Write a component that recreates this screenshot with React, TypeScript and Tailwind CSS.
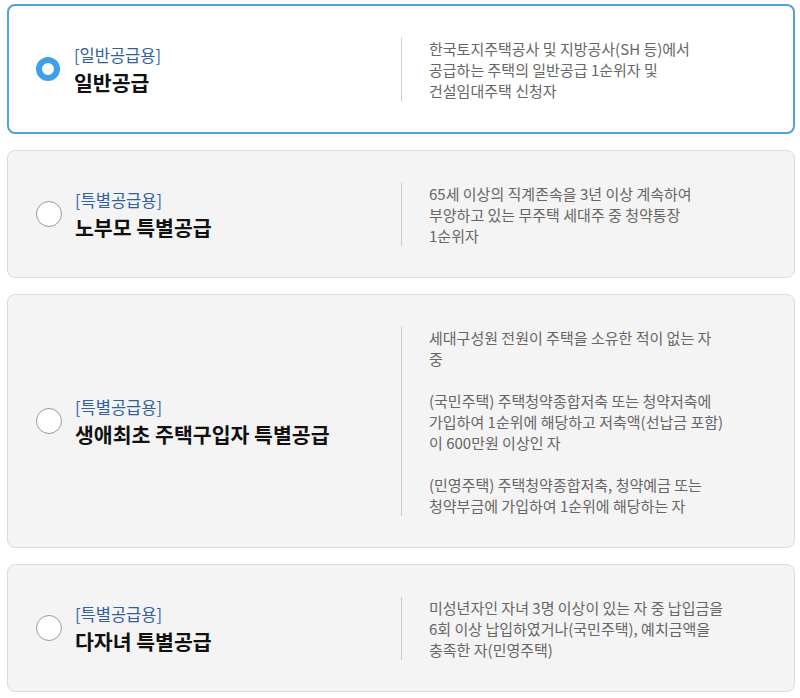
import { useState } from 'react';

type Option = {
  id: string;
  tag: string;
  title: string;
  desc: string[][];
};

const OPTIONS: Option[] = [
  {
    id: 'general',
    tag: '[일반공급용]',
    title: '일반공급',
    desc: [['한국토지주택공사 및 지방공사(SH 등)에서', '공급하는 주택의 일반공급 1순위자 및', '건설임대주택 신청자']],
  },
  {
    id: 'parents',
    tag: '[특별공급용]',
    title: '노부모 특별공급',
    desc: [['65세 이상의 직계존속을 3년 이상 계속하여', '부양하고 있는 무주택 세대주 중 청약통장', '1순위자']],
  },
  {
    id: 'first',
    tag: '[특별공급용]',
    title: '생애최초 주택구입자 특별공급',
    desc: [
      ['세대구성원 전원이 주택을 소유한 적이 없는 자', '중'],
      ['(국민주택) 주택청약종합저축 또는 청약저축에', '가입하여 1순위에 해당하고 저축액(선납금 포함)', '이 600만원 이상인 자'],
      ['(민영주택) 주택청약종합저축, 청약예금 또는', '청약부금에 가입하여 1순위에 해당하는 자'],
    ],
  },
  {
    id: 'multi',
    tag: '[특별공급용]',
    title: '다자녀 특별공급',
    desc: [['미성년자인 자녀 3명 이상이 있는 자 중 납입금을', '6회 이상 납입하였거나(국민주택), 예치금액을', '충족한 자(민영주택)']],
  },
];

export default function App() {
  const [selected, setSelected] = useState('general');

  return (
    <div
      className="w-[800px] min-h-[698px] bg-white pt-[4px] pl-[7px] flex flex-col gap-[16px]"
      style={{ fontFamily: '"Noto Sans CJK KR", "Noto Sans", sans-serif' }}
    >
      {OPTIONS.map((o) => {
        const active = selected === o.id;
        return (
          <button
            key={o.id}
            onClick={() => setSelected(o.id)}
            className={
              active
                ? 'w-[788px] rounded-lg border-2 border-[#4fa3d8] bg-white flex items-center py-[31.5px] text-left'
                : 'w-[788px] rounded-lg border border-[#dddddd] bg-[#f4f4f4] flex items-center py-[31.5px] text-left'
            }
          >
            {/* Left: radio + title */}
            <div className={active ? 'w-[392px] shrink-0 flex items-center pl-[27px] gap-[14px]' : 'w-[393px] shrink-0 flex items-center pl-[28px] gap-[13px]'}>
              {active ? (
                <span className="w-[24px] h-[24px] rounded-full border-[6px] border-[#3ca1ea] bg-white shrink-0" />
              ) : (
                <span className="w-[26px] h-[26px] rounded-full border-[1.5px] border-[#9a9a9a] bg-white shrink-0" />
              )}
              <div className="flex flex-col">
                <span className="text-[16.5px] leading-[25px] text-[#2f5ea6]">{o.tag}</span>
                <span className="text-[20.5px] leading-[28px] font-bold text-[#111111]">{o.title}</span>
              </div>
            </div>

            {/* Right: description */}
            <div className="border-l border-[#cccccc] pl-[27px] flex flex-col gap-[21px] text-[15px] leading-[21px] text-[#666666]">
              {o.desc.map((para, i) => (
                <p key={i}>
                  {para.map((line, j) => (
                    <span key={j} className="block">{line}</span>
                  ))}
                </p>
              ))}
            </div>
          </button>
        );
      })}
    </div>
  );
}
